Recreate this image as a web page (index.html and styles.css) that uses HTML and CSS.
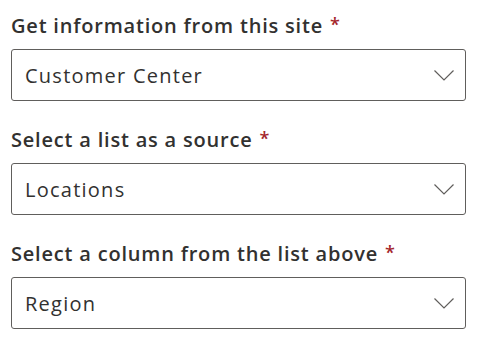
FILE: index.html
```html
<!DOCTYPE html>
<html lang="en">
<head>
  <meta charset="UTF-8">
  <title>Source settings</title>
  <link rel="stylesheet" href="styles.css">
</head>
<body>
  <div class="form">
    <!-- site -->
    <div class="field">
      <label class="field-label">Get information from this site <span class="required">*</span></label>
      <div class="dropdown">
        <span class="dropdown-value">Customer Center</span>
        <svg class="chevron" width="20" height="11" viewBox="0 0 20 11"><path d="M0.5 0.5 L10 10 L19.5 0.5" fill="none" stroke="#605e5c" stroke-width="1.2"/></svg>
      </div>
    </div>

    <!-- list -->
    <div class="field">
      <label class="field-label">Select a list as a source <span class="required">*</span></label>
      <div class="dropdown">
        <span class="dropdown-value">Locations</span>
        <svg class="chevron" width="20" height="11" viewBox="0 0 20 11"><path d="M0.5 0.5 L10 10 L19.5 0.5" fill="none" stroke="#605e5c" stroke-width="1.2"/></svg>
      </div>
    </div>

    <!-- column -->
    <div class="field">
      <label class="field-label">Select a column from the list above <span class="required">*</span></label>
      <div class="dropdown">
        <span class="dropdown-value">Region</span>
        <svg class="chevron" width="20" height="11" viewBox="0 0 20 11"><path d="M0.5 0.5 L10 10 L19.5 0.5" fill="none" stroke="#605e5c" stroke-width="1.2"/></svg>
      </div>
    </div>
  </div>
</body>
</html>
```

FILE: styles.css
```css
body {
  margin: 0;
  background-color: #fff;
  font-family: 'Open Sans', 'Noto Sans', sans-serif;
  color: #323130;
}
.form {
  display: flex;
  flex-direction: column;
  gap: 25px;
  padding: 12px 14px 0 11px;
}
.field {
  display: flex;
  flex-direction: column;
}
.field-label {
  font-size: 20px;
  font-weight: 600;
  line-height: 28px;
  letter-spacing: 0.8px;
  margin-bottom: 9px;
}
.required {
  color: #a4262c;
  margin-left: 1px;
  font-size: 18px;
  line-height: 0;
  vertical-align: 2px;
}
.dropdown {
  height: 50px;
  border: 1px solid #605e5c;
  border-radius: 3px;
  display: flex;
  align-items: center;
  justify-content: space-between;
  padding: 0 11px 0 13px;
}
.dropdown-value {
  font-size: 20px;
  letter-spacing: 1.25px;
  color: #323130;
}
.chevron {
  display: block;
  margin-top: 1px;
}
```
